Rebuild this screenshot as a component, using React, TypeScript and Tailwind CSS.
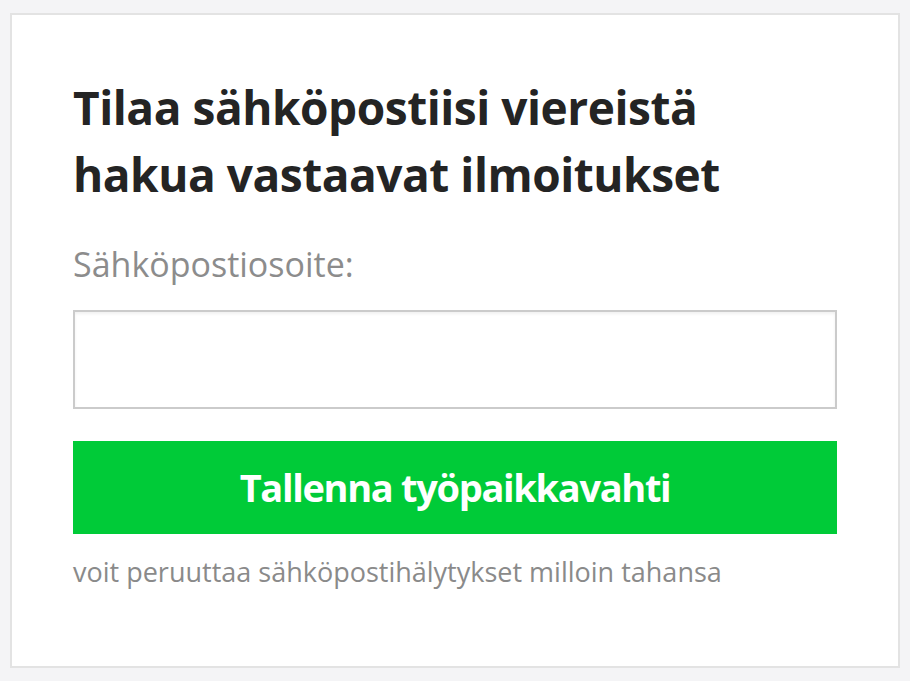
export default function App() {
  return (
    <div className="min-h-screen bg-[#f4f4f6] px-[10px] pt-[13px]">
      <div
        className="h-[655px] w-[890px] border-2 border-[#e3e3e3] bg-white px-[61px] pt-[59px]"
        style={{ fontFamily: '"Open Sans", "Noto Sans", sans-serif' }}
      >
        <h2 className="text-[46px] font-bold leading-[67px] tracking-[-0.01em] text-[#242424]">
          Tilaa sähköpostiisi viereistä
          <br />
          hakua vastaavat ilmoitukset
        </h2>
        <label className="mt-[36px] block text-[34px] leading-[40px] text-[#8c8c8c]">
          Sähköpostiosoite:
        </label>
        <input
          type="email"
          className="mt-[26px] block h-[99px] w-full border-2 border-[#cbcbcb] bg-white shadow-[inset_0_2px_3px_rgba(0,0,0,0.06)] outline-none"
        />
        <button className="mt-[32px] flex h-[93px] w-full items-center justify-center bg-[#00cb38] text-[38px] font-bold tracking-[-0.035em] text-white">
          Tallenna työpaikkavahti
        </button>
        <p className="mt-[23px] text-[27px] leading-[30px] text-[#8a8a8a]">
          voit peruuttaa sähköpostihälytykset milloin tahansa
        </p>
      </div>
    </div>
  )
}
